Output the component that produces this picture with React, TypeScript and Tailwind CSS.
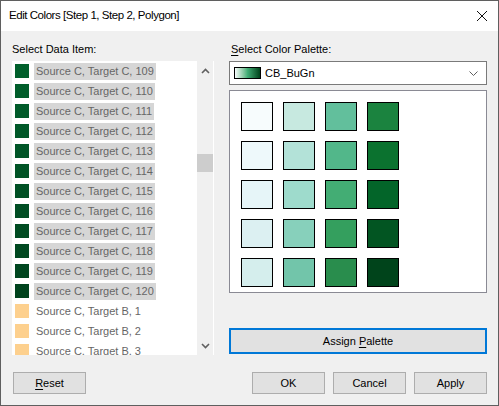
const font = { fontFamily: '"Liberation Sans", Arial, sans-serif' };

const items: { label: string; color: string; selected: boolean }[] = [
  { label: "Source C, Target C, 109", color: "#005f2b", selected: true },
  { label: "Source C, Target C, 110", color: "#005d2a", selected: true },
  { label: "Source C, Target C, 111", color: "#005a29", selected: true },
  { label: "Source C, Target C, 112", color: "#005828", selected: true },
  { label: "Source C, Target C, 113", color: "#005527", selected: true },
  { label: "Source C, Target C, 114", color: "#005325", selected: true },
  { label: "Source C, Target C, 115", color: "#005024", selected: true },
  { label: "Source C, Target C, 116", color: "#004d23", selected: true },
  { label: "Source C, Target C, 117", color: "#004b21", selected: true },
  { label: "Source C, Target C, 118", color: "#004820", selected: true },
  { label: "Source C, Target C, 119", color: "#00461f", selected: true },
  { label: "Source C, Target C, 120", color: "#00431d", selected: true },
  { label: "Source C, Target B, 1", color: "#fdd08e", selected: false },
  { label: "Source C, Target B, 2", color: "#fdd08e", selected: false },
  { label: "Source C, Target B, 3", color: "#fdd08e", selected: false },
];

// rows of the BuGn palette, 4 swatches each
const palette = [
  ["#f7fcfd", "#c7e9e0", "#62bf9c", "#1b833f"],
  ["#eef9fb", "#b3e2d8", "#52b78a", "#0b722f"],
  ["#e6f5f8", "#9edbcc", "#43ad74", "#036529"],
  ["#dcf0f2", "#87d0bb", "#349f5e", "#025522"],
  ["#d5eeed", "#72c5aa", "#298d4d", "#00441b"],
];

const Button = ({ children }: { children: React.ReactNode }) => (
  <button className="flex h-[22px] w-[73px] items-center justify-center border border-[#adadad] bg-[#e1e1e1] text-[11px] text-black">
    {children}
  </button>
);

export default function App() {
  return (
    <div
      style={font}
      className="flex h-[406px] w-[499px] flex-col border border-[#5f5f5f] bg-[#f0f0f0] text-[11px] text-black"
    >
      <div className="flex h-[30px] items-center justify-between bg-white pl-[8px] pr-[9px]">
        <span className="text-[11.5px] tracking-[-0.45px]">Edit Colors [Step 1, Step 2, Polygon]</span>
        <svg width="12" height="12" viewBox="0 0 12 12" className="mr-[1px]">
          <path d="M1 1L11 11M11 1L1 11" stroke="#111" strokeWidth="1" />
        </svg>
      </div>

      <div className="flex flex-1 flex-col px-[11px] pt-[10px]">
        <div className="flex gap-[15px]">
          {/* left: data items */}
          <div className="flex w-[202px] flex-col">
            <div className="h-[16px] leading-[16px]">Select Data Item:</div>
            <div className="mt-[4px] flex h-[294px] overflow-hidden bg-white pr-[1px]">
              <div className="flex-1 overflow-hidden">
                {items.map((it) => (
                  <div key={it.label} className="flex h-[20px] items-center pl-[3px]">
                    <div className="h-[14px] w-[14px]" style={{ backgroundColor: it.color }} />
                    <div
                      className={
                        "ml-[5px] h-[17px] px-[2px] leading-[17px] text-[#666666] " +
                        (it.selected ? "bg-[#d6d6d6]" : "")
                      }
                    >
                      {it.label}
                    </div>
                  </div>
                ))}
              </div>
              <div className="flex w-[16px] flex-col items-center bg-[#f0f0f0]">
                <svg width="9" height="6" viewBox="0 0 9 6" className="mt-[7px]">
                  <path d="M1 5L4.5 1.5L8 5" stroke="#606060" strokeWidth="1.6" fill="none" />
                </svg>
                <div className="mt-[80px] h-[18px] w-[16px] bg-[#cdcdcd]" />
                <div className="flex-1" />
                <svg width="9" height="6" viewBox="0 0 9 6" className="mb-[6px]">
                  <path d="M1 1L4.5 4.5L8 1" stroke="#606060" strokeWidth="1.6" fill="none" />
                </svg>
              </div>
            </div>
          </div>

          {/* right: palette */}
          <div className="flex w-[258px] flex-col">
            <div className="h-[16px] pl-[2px] leading-[16px]">
              <span className="underline underline-offset-2">S</span>elect Color Palette:
            </div>
            <div className="mt-[4px] flex h-[24px] items-center border border-[#7a7a7a] bg-white pl-[4px] pr-[8px]">
              <div className="h-[12px] w-[27px] border border-black bg-gradient-to-r from-[#f7fcfd] via-[#41ae76] to-[#00441b]" />
              <span className="ml-[4px] flex-1">CB_BuGn</span>
              <svg width="9" height="5" viewBox="0 0 9 5">
                <path d="M0.5 0.5L4.5 4.5L8.5 0.5" stroke="#606060" strokeWidth="1" fill="none" />
              </svg>
            </div>
            <div className="mt-[5px] h-[203px] border border-[#8a8a94] bg-white pl-[11px] pt-[11px]">
              <div className="flex flex-col gap-[10px]">
                {palette.map((row, r) => (
                  <div key={r} className="flex gap-[10px]">
                    {row.map((c) => (
                      <div
                        key={c}
                        className="h-[29px] w-[32px] border-[1.5px] border-black"
                        style={{ backgroundColor: c }}
                      />
                    ))}
                  </div>
                ))}
              </div>
            </div>
            <button className="mt-[35px] flex h-[26px] items-center justify-center border-2 border-[#0078d7] bg-[#e1e1e1]">
              Assign <span className="ml-[3px] underline underline-offset-2">P</span>alette
            </button>
          </div>
        </div>

        <div className="mt-[17px] flex items-center">
          <div className="ml-[1px]">
            <Button>
              <span className="underline underline-offset-2">R</span>eset
            </Button>
          </div>
          <div className="flex-1" />
          <div className="flex gap-[8px]">
            <Button>OK</Button>
            <Button>Cancel</Button>
            <Button>Apply</Button>
          </div>
        </div>
      </div>
    </div>
  );
}
